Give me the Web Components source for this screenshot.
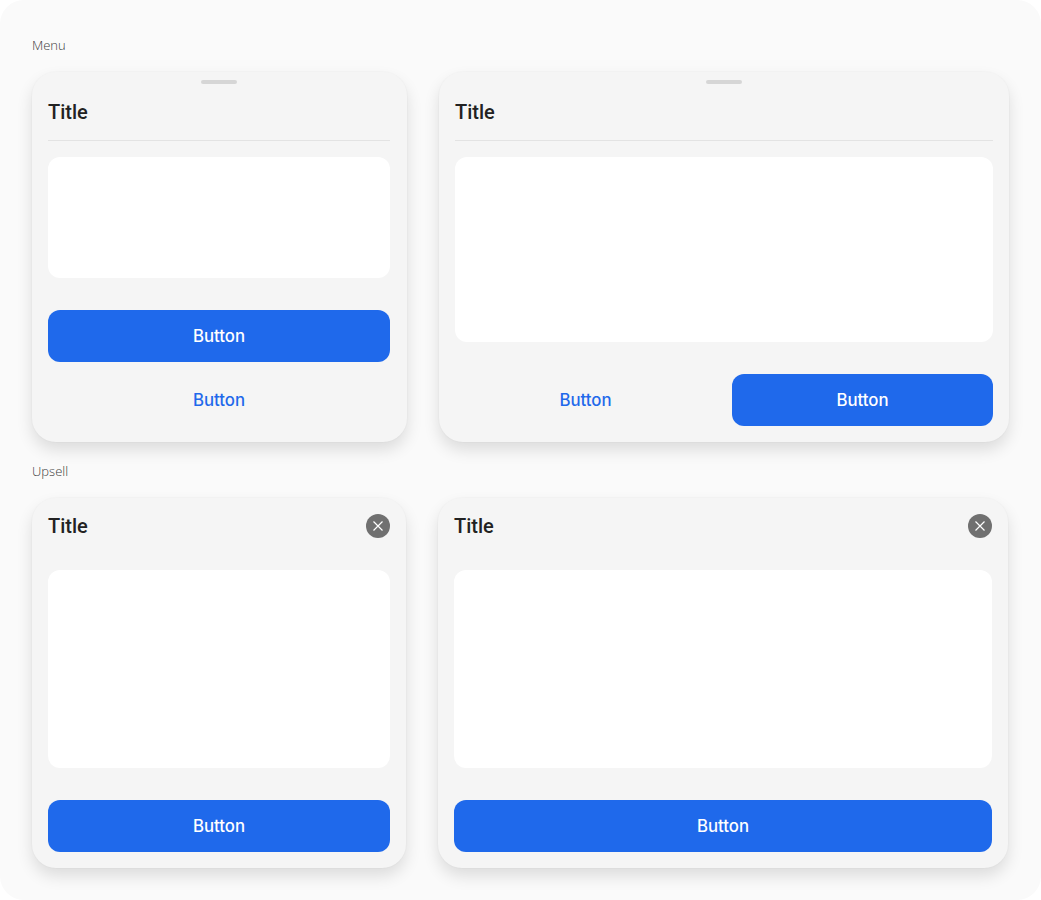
<!DOCTYPE html>
<html>
<head>
<meta charset="utf-8">
<title>Bottom sheets</title>
<style>
  html, body { margin: 0; background: #fff; }
</style>
</head>
<body>
<sheet-board>
  <sheet-group label="Menu" columns="375px 570px">
    <sheet-card handle narrow body-height="121">
      <sheet-button primary>Button</sheet-button>
      <sheet-button>Button</sheet-button>
    </sheet-card>
    <sheet-card handle body-height="185" row>
      <sheet-button>Button</sheet-button>
      <sheet-button primary>Button</sheet-button>
    </sheet-card>
  </sheet-group>
  <sheet-group label="Upsell" columns="374px 570px">
    <sheet-card closable body-height="198">
      <sheet-button primary>Button</sheet-button>
    </sheet-card>
    <sheet-card closable body-height="198">
      <sheet-button primary>Button</sheet-button>
    </sheet-card>
  </sheet-group>
</sheet-board>

<script>
class SheetBoard extends HTMLElement {
  constructor() {
    super();
    this.attachShadow({ mode: 'open' });
    this.shadowRoot.innerHTML = `
      <style>
        :host {
          display: flex;
          flex-direction: column;
          gap: 21px;
          box-sizing: border-box;
          width: 1041px;
          height: 900px;
          padding: 37px 32px 0;
          background: #fafafa;
          border-radius: 24px;
          font-family: Inter, sans-serif;
        }
      </style>
      <slot></slot>
    `;
  }
}

class SheetGroup extends HTMLElement {
  constructor() {
    super();
    this.attachShadow({ mode: 'open' });
    this.shadowRoot.innerHTML = `
      <style>
        :host {
          display: flex;
          flex-direction: column;
          gap: 19px;
        }
        .label {
          font: 300 13px/16px "Open Sans", sans-serif;
          color: #3c3c3c;
        }
        .cards {
          display: grid;
          column-gap: 32px;
          justify-content: start;
        }
      </style>
      <div class="label"></div>
      <div class="cards"><slot></slot></div>
    `;
  }

  connectedCallback() {
    this.shadowRoot.querySelector('.label').textContent = this.getAttribute('label');
    this.shadowRoot.querySelector('.cards').style.gridTemplateColumns = this.getAttribute('columns');
  }
}

class SheetCard extends HTMLElement {
  constructor() {
    super();
    this.attachShadow({ mode: 'open' });
    this.shadowRoot.innerHTML = `
      <style>
        :host {
          display: flex;
          flex-direction: column;
          box-sizing: border-box;
          height: 370px;
          padding: 0 16px 16px;
          background: #f5f5f5;
          border-radius: 24px;
          box-shadow: 0 0 0 1px rgba(0, 0, 0, 0.015), 0 8px 16px rgba(0, 0, 0, 0.12);
        }
        :host([narrow]) { padding-right: 17px; }
        .handle {
          align-self: center;
          width: 36px;
          height: 4px;
          margin-top: 8px;
          border-radius: 2px;
          background: #d6d6d6;
        }
        .head {
          display: flex;
          align-items: center;
          justify-content: space-between;
          height: 24px;
          margin-top: 16px;
          font-family: Roboto, sans-serif;
          font-size: 20px;
          font-weight: 500;
          line-height: 24px;
          color: #222;
        }
        :host([handle]) .head {
          margin-top: 16px;
          padding-bottom: 16px;
          border-bottom: 1px solid #e3e3e3;
          box-sizing: content-box;
        }
        :host(:not([handle])) .handle { display: none; }
        :host([closable]) .head { margin-bottom: 32px; }
        .close {
          display: none;
          width: 24px;
          height: 24px;
          border-radius: 50%;
          background: #707070;
          align-items: center;
          justify-content: center;
        }
        :host([closable]) .close { display: flex; }
        .body {
          flex: none;
          background: #fff;
          border-radius: 12px;
        }
        :host([handle]) .body { margin-top: 16px; }
        .actions {
          display: grid;
          row-gap: 12px;
          column-gap: 16px;
          margin-top: 32px;
        }
        :host([row]) .actions { grid-template-columns: 1fr 1fr; }
      </style>
      <div class="handle"></div>
      <div class="head">
        <span>Title</span>
        <span class="close">
          <svg width="12" height="12" viewBox="0 0 12 12" fill="none" stroke="#fff" stroke-width="1.2">
            <path d="M1.5 1.5l9 9M10.5 1.5l-9 9"/>
          </svg>
        </span>
      </div>
      <div class="body"></div>
      <div class="actions"><slot></slot></div>
    `;
  }

  connectedCallback() {
    this.shadowRoot.querySelector('.body').style.height = this.getAttribute('body-height') + 'px';
  }
}

class SheetButton extends HTMLElement {
  constructor() {
    super();
    this.attachShadow({ mode: 'open' });
    this.shadowRoot.innerHTML = `
      <style>
        :host {
          display: flex;
          align-items: center;
          justify-content: center;
          box-sizing: border-box;
          height: 52px;
          border-radius: 12px;
          font-family: Inter, sans-serif;
          font-size: 16.8px;
          font-weight: 550;
          color: #1f69eb;
        }
        :host([primary]) {
          background: #1f69eb;
          color: #fff;
        }
      </style>
      <slot></slot>
    `;
  }
}

customElements.define('sheet-board', SheetBoard);
customElements.define('sheet-group', SheetGroup);
customElements.define('sheet-card', SheetCard);
customElements.define('sheet-button', SheetButton);
</script>
</body>
</html>
